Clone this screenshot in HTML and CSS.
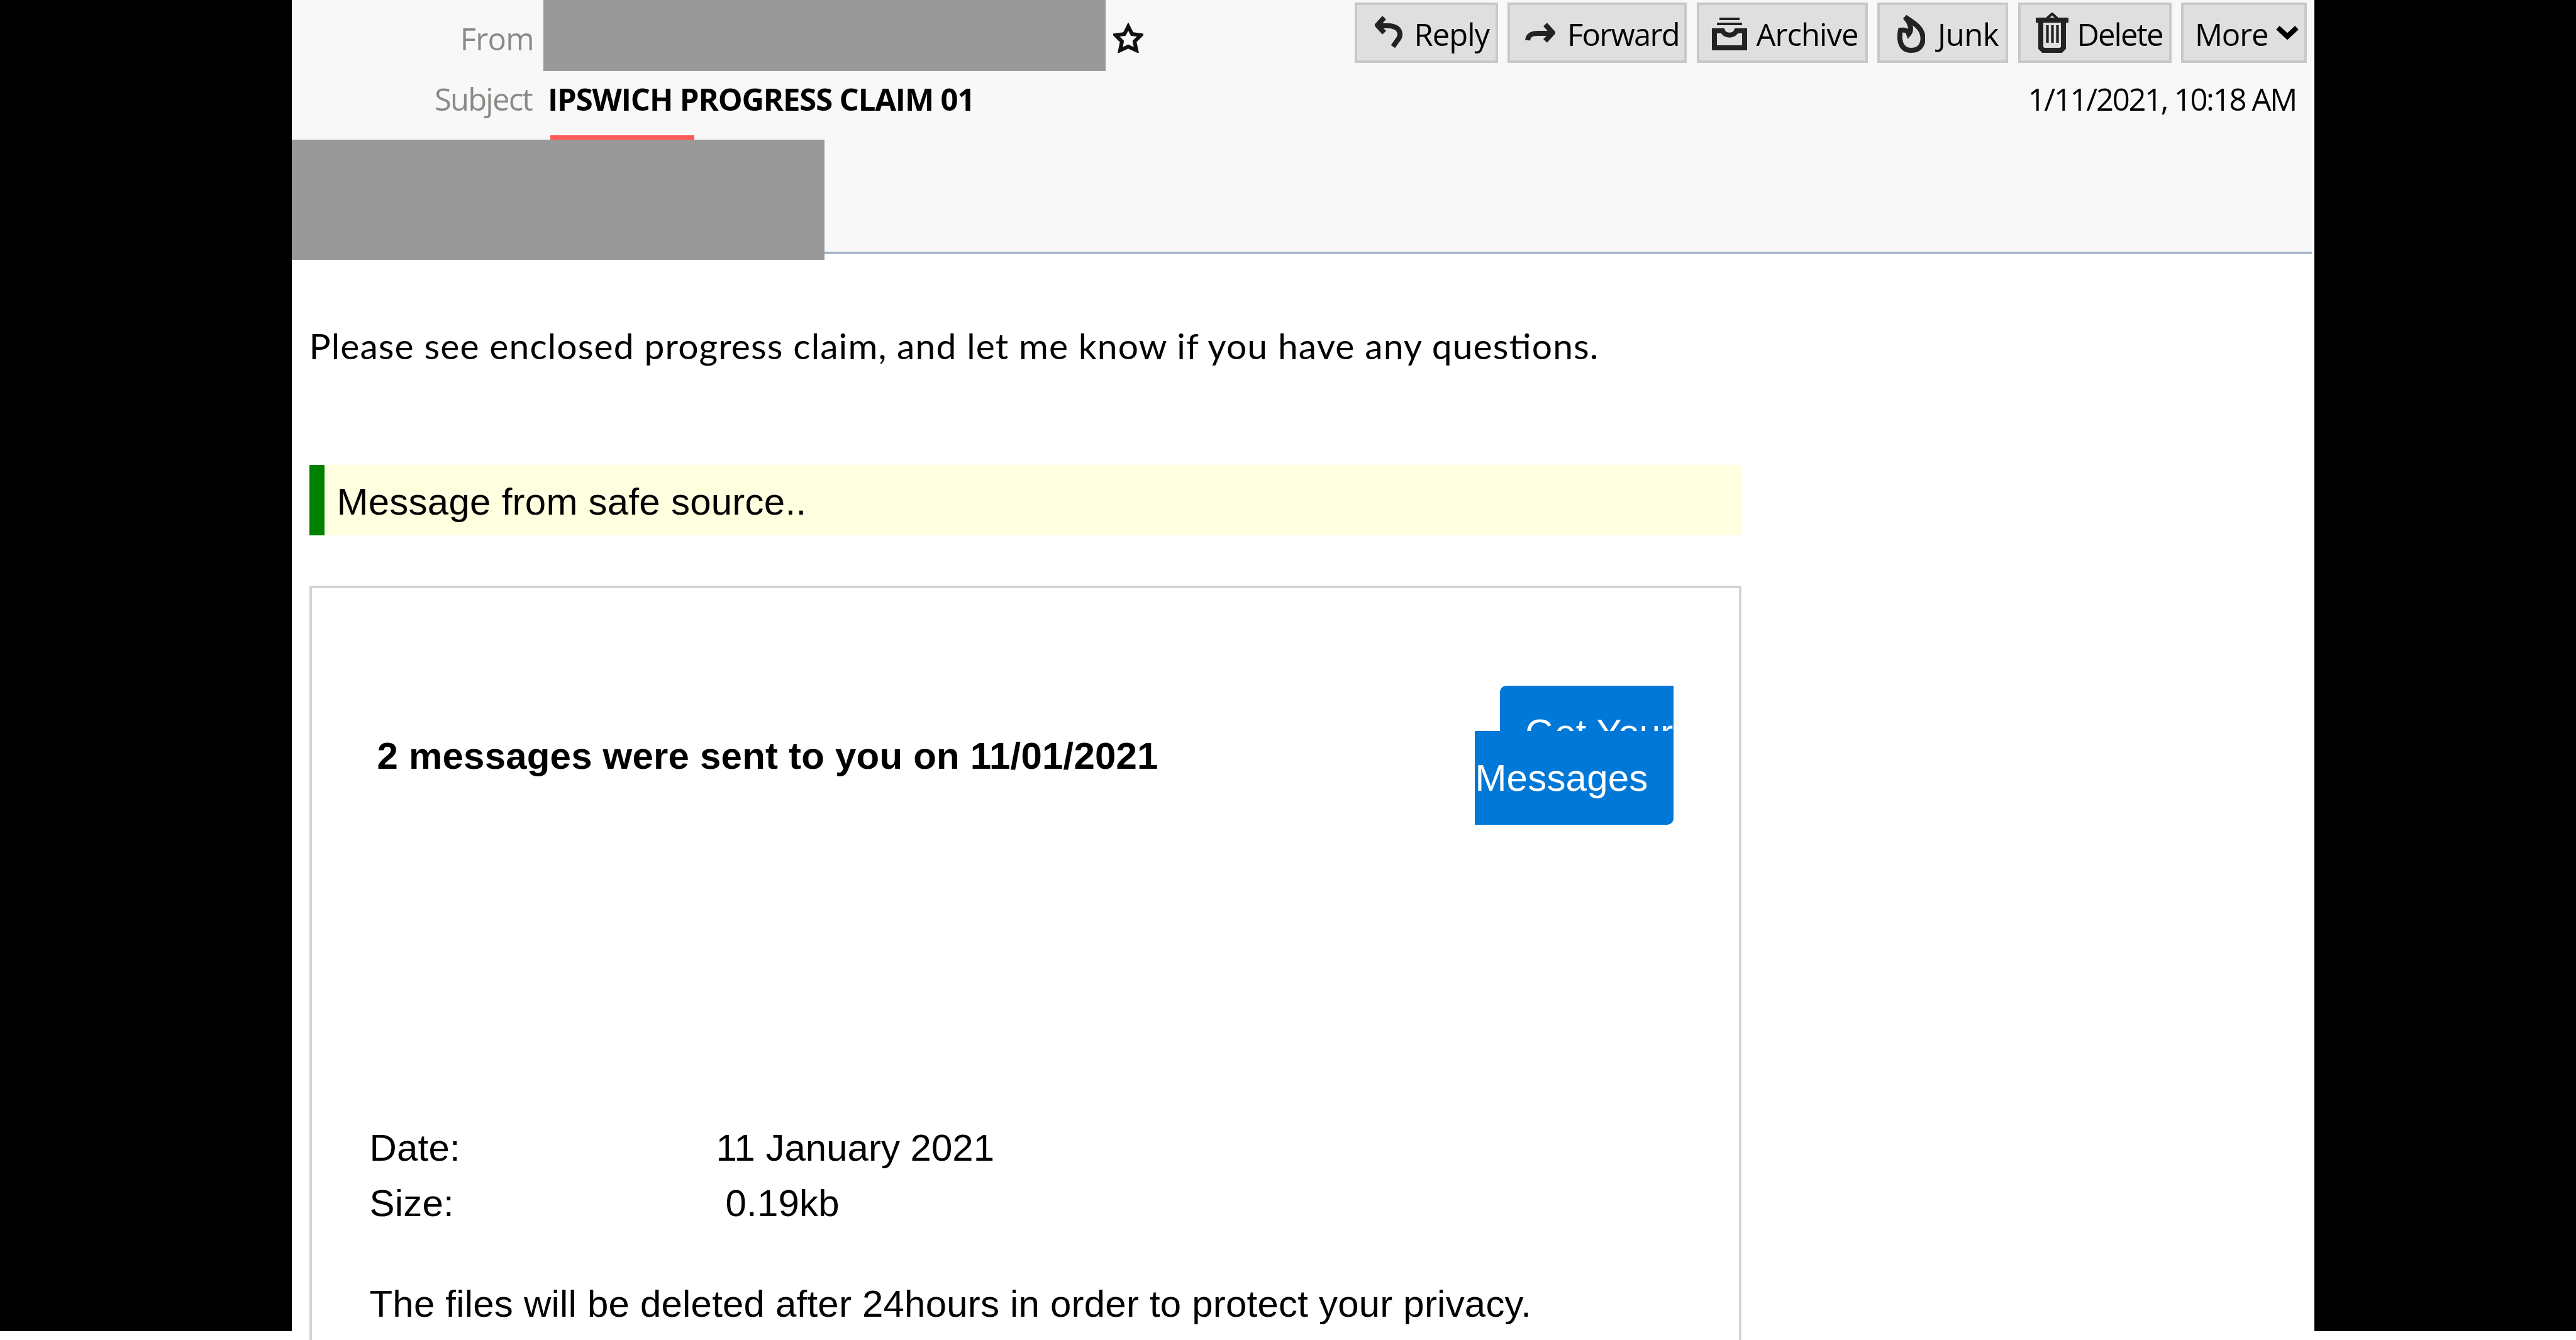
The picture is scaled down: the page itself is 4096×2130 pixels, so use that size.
FILE: index.html
```html
<!DOCTYPE html>
<html lang="en">
<head>
<meta charset="UTF-8">
<title>IPSWICH PROGRESS CLAIM 01</title>
<link rel="stylesheet" href="styles.css">
</head>
<body>

<div class="screen">
    <div class="side"></div>
    <div class="mail">
        <div class="header">
            <div class="from-row">
                <div class="label from">From</div>
                <div class="redacted sender"></div>
                <svg class="star" viewBox="0 0 48 48"><path d="M24 6L30 18L44 20L34 30L37 44L24 38L11 44L14 30L4 20L18 18Z"/></svg>
                <div class="toolbar">
                    <div class="btn reply">
                        <svg class="icon" viewBox="0 0 46 54"><path d="M15 4L4 16L15 28M6 17H22C42 18 43 32 36 40L29 50"/></svg>
                        <span>Reply</span>
                    </div>
                    <div class="btn forward">
                        <svg class="icon" viewBox="0 0 48 32"><path d="M32 3L44 16L32 29M42 17H20C10 17 5 20 4 28"/></svg>
                        <span>Forward</span>
                    </div>
                    <div class="btn archive">
                        <svg class="icon" viewBox="0 0 56 53"><path d="M4 48V21H17C21 30 35 30 39 21H52V48Z"/><path class="thin" d="M12 2H44M8 10H48"/></svg>
                        <span>Archive</span>
                    </div>
                    <div class="btn junk">
                        <svg class="icon" viewBox="0 0 44 60"><path d="M12 3C22 14 23 24 18 30C16 24 12 23 5 24C2 38 4 56 22 56C42 56 43 36 38 26C34 17 24 11 12 3Z"/></svg>
                        <span>Junk</span>
                    </div>
                    <div class="btn delete">
                        <svg class="icon" viewBox="0 0 52 64"><path d="M0 12H52M8 14V56L12 60H40L44 56V14"/><path class="thin" d="M18 9L26 2L34 9M18.500 20V48M26.500 20V48M34.500 20V48"/></svg>
                        <span>Delete</span>
                    </div>
                    <div class="btn more">
                        <span>More</span>
                        <svg class="icon" viewBox="0 0 36 24"><path d="M3 4L18 18L33 4"/></svg>
                    </div>
                </div>
            </div>
            <div class="subject-row">
                <div class="label">Subject</div>
                <div class="subject">IPSWICH PROGRESS CLAIM 01</div>
                <div class="date">1/11/2021, 10:18 AM</div>
            </div>
            <div class="tag"></div>
            <div class="redacted recipient"></div>
        </div>

        <div class="message">
            <p class="intro">Please see enclosed progress claim, and let me know if you have any questions.</p>
            <div class="safe">Message from safe source..</div>
            <div class="card">
                <div class="card-top">
                    <div class="title">2 messages were sent to you on 11/01/2021</div>
                    <div class="link-cell"><a class="link">Get Your Messages</a></div>
                </div>
                <div class="details">
                    <span>Date:</span><span class="v1">11 January 2021</span>
                    <span>Size:</span><span class="v2">0.19kb</span>
                </div>
                <p class="note">The files will be deleted after 24hours in order to protect your privacy.</p>
            </div>
        </div>
    </div>
    <div class="side right"></div>
</div>

</body>
</html>
```
FILE: styles.css
```css
body {
    margin: 0;
    width: 4096px;
    height: 2130px;
    overflow: hidden;
    background-color: #fff;
    color: #000;
    font-family: "Liberation Sans", Arial, sans-serif;
    font-size: 60px;
    letter-spacing: 0.2px;
}
p {
    margin: 0;
}
svg {
    display: block;
    flex: none;
    fill: none;
}
.screen {
    display: flex;
    height: 2130px;
}
.side {
    flex: none;
    width: 464px;
    height: 2116px;
    background-color: #000;
}
.side.right {
    width: 416px;
}
.mail {
    flex: 1;
    min-width: 0;
}

/* message header */
.header {
    width: 3212px;
    height: 400px;
    background-color: #f8f8f8;
    border-bottom: 4px solid #a9b7c9;
    font-family: "Open Sans", "Noto Sans", sans-serif;
    font-size: 49px;
}
.from-row {
    display: flex;
    align-items: flex-start;
    height: 121px;
}
.label {
    flex: none;
    width: 382px;
    text-align: right;
    letter-spacing: -1.8px;
    color: #8a8a86;
}
.label.from {
    width: 385px;
    line-height: 123px;
    letter-spacing: -0.7px;
}
.redacted {
    flex: none;
    background-color: #999;
}
.sender {
    width: 894px;
    height: 113px;
    margin-left: 15px;
}
.star {
    width: 48px;
    height: 48px;
    margin: 36px 0 0 12px;
    stroke: #111;
    stroke-width: 6;
}
.toolbar {
    display: flex;
    flex: none;
    gap: 15.5px;
    margin: 4px 8px 0 auto;
}
.btn {
    display: flex;
    align-items: center;
    box-sizing: border-box;
    height: 96px;
    border: 4px solid #c8c8c8;
    background-color: #dfdfdf;
    line-height: 86px;
    white-space: nowrap;
}
.btn span {
    padding-top: 3px;
}
.icon {
    stroke: #222;
    stroke-width: 8;
}
.icon .thin {
    stroke-width: 4.2;
}
.reply {
    width: 228px;
    padding-left: 28px;
    letter-spacing: -1px;
}
.reply .icon {
    width: 46px;
    height: 54px;
    margin: -3px 17px 0 0;
}
.forward {
    width: 285px;
    padding-left: 24px;
    letter-spacing: -1.7px;
}
.forward .icon {
    width: 48px;
    height: 32px;
    margin-right: 19px;
}
.archive {
    width: 272px;
    padding-left: 20px;
    letter-spacing: -1px;
}
.archive .icon {
    width: 56px;
    height: 53px;
    margin: 4px 15px 0 0;
}
.junk {
    width: 208px;
    padding-left: 28px;
    letter-spacing: -0.5px;
}
.junk .icon {
    width: 44px;
    height: 60px;
    margin: 4px 20px 0 0;
}
.delete {
    width: 244px;
    padding-left: 24px;
    letter-spacing: -2px;
}
.delete .icon {
    width: 52px;
    height: 64px;
    margin-right: 14px;
}
.more {
    width: 200px;
    padding-left: 18px;
    letter-spacing: -1.2px;
}
.more .icon {
    width: 36px;
    height: 24px;
    margin-left: 13px;
    stroke: #000;
}
.subject-row {
    display: flex;
    height: 72px;
}
.subject-row div {
    line-height: 72px;
    white-space: nowrap;
}
.subject {
    margin-left: 25px;
    font-weight: bold;
    letter-spacing: -1.15px;
}
.date {
    margin: 0 25px 0 auto;
    letter-spacing: -2.3px;
}
.tag {
    width: 229px;
    height: 7px;
    margin: 18px 0 0 411px;
    border-top: 4px solid #fff;
    background-color: #ff5959;
}
.recipient {
    width: 847px;
    height: 191px;
}

/* message body */
.message {
    padding: 106px 0 0 27.5px;
}
.intro {
    font-family: Lato, sans-serif;
    font-size: 57px;
    line-height: 78px;
    letter-spacing: 1.1px;
    font-feature-settings: "liga" 1;
    white-space: nowrap;
}
.safe {
    box-sizing: border-box;
    width: 2277px;
    height: 112px;
    margin-top: 151px;
    padding: 6px 0 0 20px;
    border-left: 24px solid #008000;
    background-color: #ffffdf;
    line-height: 106px;
    letter-spacing: 0.25px;
}
.card {
    box-sizing: border-box;
    width: 2277px;
    height: 1300px;
    margin-top: 80px;
    padding: 194px 104px 0 92px;
    border: 4px solid #d3d3d3;
}
.card-top {
    display: flex;
    align-items: center;
    justify-content: space-between;
}
.title {
    padding-left: 12px;
    font-weight: bold;
    white-space: nowrap;
}
.link-cell {
    width: 318px;
    line-height: 72px;
    text-align: right;
}
.link {
    padding: 41px 40px;
    border-radius: 10px;
    background-color: #0078d7;
    color: #fff;
}
.details {
    display: grid;
    grid-template-columns: 551px auto;
    margin-top: 508px;
    line-height: 88px;
}
.v1 {
    letter-spacing: 0;
}
.v2 {
    padding-left: 15px;
}
.note {
    margin-top: 72px;
    line-height: 88px;
    white-space: nowrap;
}
```
